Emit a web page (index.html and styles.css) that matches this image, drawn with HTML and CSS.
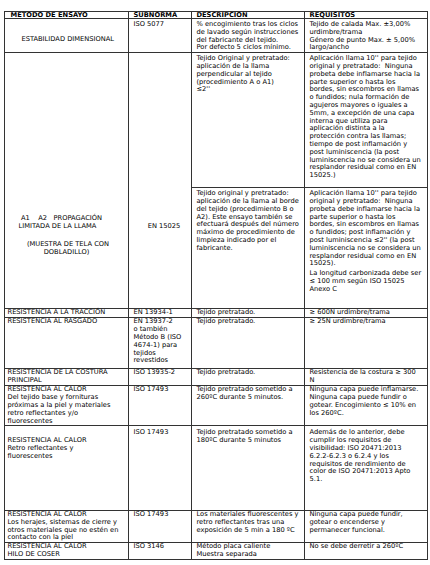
FILE: index.html
```html
<!DOCTYPE html>
<html lang="es">
<head>
<meta charset="utf-8">
<title>Métodos de ensayo</title>
<link rel="stylesheet" href="styles.css">
</head>
<body>
<table class="tests">
  <colgroup>
    <col class="c1"><col class="c2"><col class="c3"><col class="c4">
  </colgroup>
  <thead>
    <tr class="h-head">
      <th class="first">MÉTODO DE ENSAYO</th>
      <th>SUBNORMA</th>
      <th>DESCRIPCIÓN</th>
      <th>REQUISITOS</th>
    </tr>
  </thead>
  <tbody>
    <tr class="h-r1 upper">
      <td class="first centered pad-estab">ESTABILIDAD DIMENSIONAL</td>
      <td>ISO 5077</td>
      <td>% encogimiento tras los ciclos<br>de lavado según instrucciones<br>del fabricante del tejido.<br>Por defecto 5 ciclos mínimo.</td>
      <td>Tejido de calada Max. ±3,00%<br>urdimbre/trama<br>Género de punto Max. ± 5,00%<br>largo/ancho</td>
    </tr>
    <tr class="h-2a upper">
      <td class="first centered pad-llama" rowspan="2">
        <p><span class="sh-a">A1&nbsp;&nbsp;&nbsp; A2&nbsp;&nbsp; PROPAGACIÓN</span><br><span class="sh-b">LIMITADA DE LA LLAMA</span></p>
        <p class="muestra"><span class="sh-c">(MUESTRA DE TELA CON</span><br>DOBLADILLO)</p>
      </td>
      <td class="centered pad-en" rowspan="2">EN 15025</td>
      <td>Tejido Original y pretratado:<br>aplicación de la llama<br>perpendicular al tejido<br>(procedimiento A o A1)<br>≤2''</td>
      <td>Aplicación llama 10'' para tejido<br>original y pretratado:&nbsp; Ninguna<br>probeta debe inflamarse hacia la<br>parte superior o hasta los<br>bordes, sin escombros en llamas<br>o fundidos; nula formación de<br>agujeros mayores o iguales a<br>5mm, a excepción de una capa<br>interna que utiliza para<br>aplicación distinta a la<br>protección contra las llamas;<br>tiempo de post inflamación y<br>post luminiscencia (la post<br>luminiscencia no se considera un<br>resplandor residual como en EN<br>15025.)</td>
    </tr>
    <tr class="h-2b upper">
      <td>Tejido original y pretratado:<br>aplicación de la llama al borde<br>del tejido (procedimiento B o<br>A2). Este ensayo también se<br>efectuará después del número<br>máximo de procedimiento de<br>limpieza indicado por el<br>fabricante.</td>
      <td><p>Aplicación llama 10'' para tejido<br>original y pretratado:&nbsp; Ninguna<br>probeta debe inflamarse hacia la<br>parte superior o hasta los<br>bordes, sin escombros en llamas<br>o fundidos; post inflamación y<br>post luminiscencia ≤2'' (la post<br>luminiscencia no se considera un<br>resplandor residual como en EN<br>15025).</p><p class="para">La longitud carbonizada debe ser<br>≤ 100 mm según ISO 15025<br>Anexo C</p></td>
    </tr>
    <tr class="h-trac lower">
      <td class="first">RESISTENCIA A LA TRACCIÓN</td>
      <td>EN 13934-1</td>
      <td>Tejido pretratado.</td>
      <td>≥ 600N urdimbre/trama</td>
    </tr>
    <tr class="h-rasg lower">
      <td class="first">RESISTENCIA AL RASGADO</td>
      <td>EN 13937-2<br>o también<br>Método B (ISO<br>4674-1) para<br>tejidos<br>revestidos</td>
      <td>Tejido pretratado.</td>
      <td>≥ 25N urdimbre/trama</td>
    </tr>
    <tr class="h-cost lower">
      <td class="first">RESISTENCIA DE LA COSTURA<br>PRINCIPAL</td>
      <td>ISO 13935-2</td>
      <td>Tejido pretratado.</td>
      <td>Resistencia de la costura ≥ 300<br>N</td>
    </tr>
    <tr class="h-cal1 lower">
      <td class="first">RESISTENCIA AL CALOR<br>Del tejido base y fornituras<br>próximas a la piel y materiales<br>retro reflectantes y/o<br>fluorescentes</td>
      <td>ISO 17493</td>
      <td>Tejido pretratado sometido a<br>260ºC durante 5 minutos.</td>
      <td>Ninguna capa puede inflamarse.<br>Ninguna capa puede fundir o<br>gotear. Encogimiento ≤ 10% en<br>los 260ºC.</td>
    </tr>
    <tr class="h-cal2 lower spaced">
      <td class="first"><br>RESISTENCIA AL CALOR<br>Retro reflectantes y<br>fluorescentes</td>
      <td>ISO 17493</td>
      <td>Tejido pretratado sometido a<br>180ºC durante 5 minutos</td>
      <td>Además de lo anterior, debe<br>cumplir los requisitos de<br>visibilidad: ISO 20471:2013<br>6.2.2-6.2.3 o 6.2.4 y los<br>requisitos de rendimiento de<br>color de ISO 20471:2013 Apto<br>5.1.</td>
    </tr>
    <tr class="h-cal3 lower">
      <td class="first">RESISTENCIA AL CALOR<br>Los herajes, sistemas de cierre y<br>otros materiales que no estén en<br>contacto con la piel</td>
      <td>ISO 17493</td>
      <td>Los materiales fluorescentes y<br>retro reflectantes tras una<br>exposición de 5 min a 180 ºC</td>
      <td>Ninguna capa puede fundir,<br>gotear o encenderse y<br>permanecer funcional.</td>
    </tr>
    <tr class="h-hilo lower">
      <td class="first">RESISTENCIA AL CALOR<br>HILO DE COSER</td>
      <td>ISO 3146</td>
      <td>Método placa caliente<br>Muestra separada</td>
      <td>No se debe derretir a 260ºC</td>
    </tr>
  </tbody>
</table>
</body>
</html>
```
FILE: styles.css
```css
html, body {
  margin: 0;
  padding: 0;
  background: #ffffff;
}

body {
  font-family: "DejaVu Sans", Verdana, sans-serif;
  font-size: 6.7px;
  line-height: 7.8px;
  color: #000000;
}

.tests {
  margin: 11px 0 0 4px;
  width: 423px;
  table-layout: fixed;
  border-collapse: collapse;
}

.c1 { width: 124px; }
.c2 { width: 63px; }
.c3 { width: 113px; }
.c4 { width: 123px; }

.tests th,
.tests td {
  border: 1px solid #333333;
  vertical-align: top;
  text-align: left;
  white-space: nowrap;
  box-sizing: border-box;
  padding: 0 2px 0 4.5px;
}

.tests th {
  font-weight: bold;
  line-height: 6px;
  padding-top: 0;
  padding-bottom: 0;
  overflow: hidden;
}

.tests th.first { padding-left: 5.5px; }

.tests p { margin: 0; }

.upper td { padding-top: 2px; }
.lower td { padding-top: 0.2px; }
.lower td.first { padding-left: 2.5px; }
.spaced td { padding-top: 3px; }

.centered { text-align: center !important; }

.pad-estab { padding-top: 16.5px !important; }
.pad-llama { padding-top: 162px !important; padding-left: 2px !important; padding-right: 2px !important; }
.pad-en { padding-top: 170px !important; padding-left: 8px !important; padding-right: 0 !important; }

.muestra { margin-top: 10.5px !important; }
.para { margin-top: 2px !important; }

.sh-a { display: inline-block; padding-right: 10px; }
.sh-b { display: inline-block; padding-right: 18px; }
.sh-c { display: inline-block; padding-left: 3px; }

.h-head { height: 6.5px; }
.h-r1 { height: 33.5px; }
.h-2a { height: 135px; }
.h-2b { height: 121px; }
.h-trac { height: 8px; }
.h-rasg { height: 51px; }
.h-cost { height: 17px; }
.h-cal1 { height: 39px; }
.h-cal2 { height: 84.5px; }
.h-cal3 { height: 31.2px; }
.h-hilo { height: 15.6px; }
```
